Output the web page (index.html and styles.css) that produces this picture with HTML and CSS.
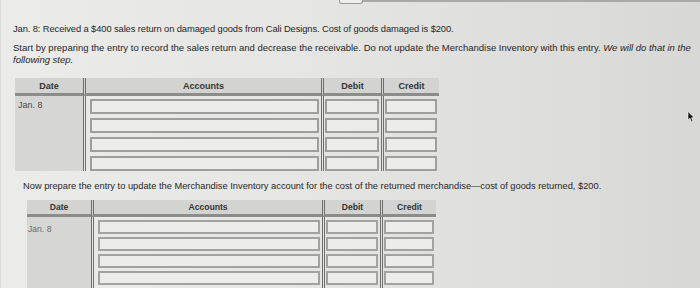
FILE: index.html
```html
<!DOCTYPE html>
<html lang="en">
<head>
<meta charset="utf-8">
<title>Journal entry</title>
<link rel="stylesheet" href="styles.css">
</head>
<body>
<div class="page">
  <div class="topbar"><span class="tab"></span></div>
  <p class="q">Jan. 8: Received a $400 sales return on damaged goods from Cali Designs. Cost of goods damaged is $200.</p>
  <p class="inst">Start by preparing the entry to record the sales return and decrease the receivable. Do not update the Merchandise Inventory with this entry. <em>We will do that in the</em> <em>following step.</em></p>

  <div class="journal j1">
    <div class="hd date">Date</div>
    <div class="hd acc">Accounts</div>
    <div class="hd deb">Debit</div>
    <div class="hd cre">Credit</div>
    <div class="dcell">Jan. 8</div>
    <div class="col acc"><span class="in"></span><span class="in"></span><span class="in"></span><span class="in"></span></div>
    <div class="col deb"><span class="in"></span><span class="in"></span><span class="in"></span><span class="in"></span></div>
    <div class="col cre"><span class="in"></span><span class="in"></span><span class="in"></span><span class="in"></span></div>
  </div>

  <p class="inst2">Now prepare the entry to update the Merchandise Inventory account for the cost of the returned merchandise—cost of goods returned, $200.</p>

  <div class="journal j2">
    <div class="hd date">Date</div>
    <div class="hd acc">Accounts</div>
    <div class="hd deb">Debit</div>
    <div class="hd cre">Credit</div>
    <div class="dcell">Jan. 8</div>
    <div class="col acc"><span class="in"></span><span class="in"></span><span class="in"></span><span class="in"></span></div>
    <div class="col deb"><span class="in"></span><span class="in"></span><span class="in"></span><span class="in"></span></div>
    <div class="col cre"><span class="in"></span><span class="in"></span><span class="in"></span><span class="in"></span></div>
  </div>

  <svg class="cursor" width="8" height="12" viewBox="0 0 8 12"><path d="M1 0.5 L1 9 L3 7.2 L4.6 11 L6 10.3 L4.5 6.8 L7 6.6 Z" fill="#111" stroke="#fff" stroke-width="0.6"/></svg>
</div>
</body>
</html>
```
FILE: styles.css
```css
html, body {
  margin: 0;
  padding: 0;
}
body {
  width: 700px;
  height: 288px;
  overflow: hidden;
  font-family: "Liberation Sans", Arial, sans-serif;
  color: #262626;
}
.page {
  position: relative;
  width: 700px;
  height: 288px;
  background: linear-gradient(90deg, #ebebe9 0%, #e6e6e4 40%, #dededc 75%, #d8d8d6 100%);
  padding: 0 0 0 12px;
  box-sizing: border-box;
  overflow: hidden;
  border-left: 1px solid #dcdcda;
}
.topbar {
  height: 2px;
  margin-left: 330px;
  border-top: 2px solid #a9a9a7;
  position: relative;
}
.tab {
  position: absolute;
  left: -4px;
  top: -3px;
  width: 22px;
  height: 4px;
  border: 1px solid #9a9a98;
  border-top: none;
  border-radius: 0 0 3px 3px;
  background: #eeeeec;
}
p {
  margin: 0;
}
.q {
  font-size: 9.35px;
  letter-spacing: -0.1px;
  margin-top: 19px;
  line-height: 12px;
}
.inst {
  font-size: 9.5px;
  margin-top: 7px;
  line-height: 12px;
  padding-right: 0;
}
.inst em {
  font-style: italic;
}
.inst2 {
  font-size: 9.3px;
  line-height: 12px;
  margin: 9px 0 0 10px;
}

.journal {
  display: grid;
  font-size: 9px;
}
.j1 {
  margin-top: 12px;
  margin-left: 2px;
  grid-template-columns: 68px 238px 60px 58px;
  grid-template-rows: 18px 75px;
  width: 424px;
}
.j2 {
  margin-top: 8px;
  margin-left: 14px;
  grid-template-columns: 64px 231px 58px 56px;
  grid-template-rows: 17px 80px;
  width: 409px;
  font-size: 8.6px;
}
.hd {
  background: #d3d3d1;
  border-bottom: 3px solid #8c8c8a;
  font-weight: bold;
  text-align: center;
  line-height: 16px;
  color: #333;
}
.j2 .hd {
  line-height: 15px;
}
.acc, .deb, .cre {
  border-left: 3px double #6e6e6c;
}
.dcell {
  background: #d6d6d4;
  padding: 4px 0 0 3px;
  color: #4a4a48;
}
.j2 .dcell {
  padding-top: 7px;
  padding-left: 1px;
  color: #6a6a68;
}
.col {
  display: flex;
  flex-direction: column;
  gap: 4px;
  padding: 3px 2px 0 1px;
}
.col.acc {
  padding-left: 4px;
}
.j2 .col {
  gap: 3px;
  padding-top: 3px;
}
.in {
  display: block;
  height: 11px;
  border: 2px solid #9e9e9c;
  background: #ececea;
}
.j2 .in {
  height: 10px;
  border-color: #a2a2a0;
}
.cursor {
  position: absolute;
  left: 686px;
  top: 111px;
}
```
